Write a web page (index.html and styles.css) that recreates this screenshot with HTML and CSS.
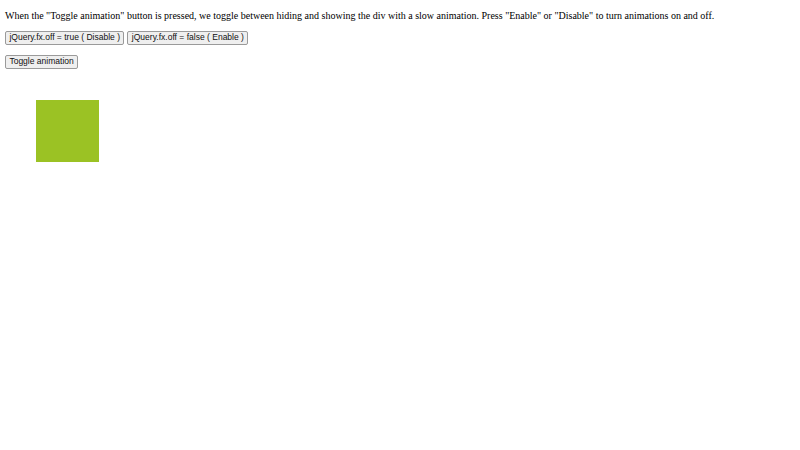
FILE: index.html
```html
<!DOCTYPE html>
<html>
<head>
<meta charset="utf-8">
<link rel="stylesheet" href="styles.css">
</head>
<body>
<p class="intro">When the "Toggle animation" button is pressed, we toggle between hiding and showing the div with a slow animation. Press "Enable" or "Disable" to turn animations on and off.</p>
<div class="row">
<button class="btn">jQuery.fx.off = true ( Disable )</button>
<button class="btn">jQuery.fx.off = false ( Enable )</button>
</div>
<div class="row row-toggle">
<button class="btn">Toggle animation</button>
</div>
<div class="box"></div>
</body>
</html>
```
FILE: styles.css
```css
html, body {
  margin: 0;
  padding: 0;
  background: #fff;
}
body {
  padding: 5px;
  font-family: "Liberation Serif", serif;
  font-size: 10px;
  color: #000;
}
.intro {
  margin: 5px 0 0 0;
  line-height: 11.8px;
}
.row {
  display: flex;
  gap: 3px;
  margin-top: 9.5px;
}
.row-toggle {
  margin-top: 10.6px;
}
.btn {
  font-family: "Liberation Sans", Arial, sans-serif;
  font-size: 8.53px;
  height: 13.4px;
  padding: 0 3.4px;
  line-height: 11px;
  border: 1px solid #9a9a9a;
  border-radius: 2px;
  background: #efefef;
  color: #111;
}
.box {
  width: 63px;
  height: 62px;
  margin: 31.6px 0 0 31px;
  background: #9bc224;
}
```
